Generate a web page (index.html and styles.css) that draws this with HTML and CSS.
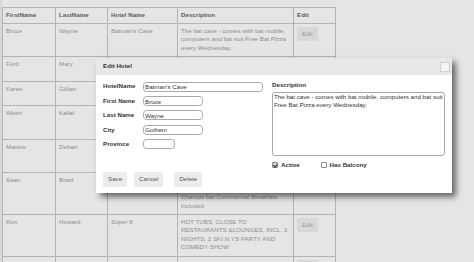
FILE: index.html
```html
<!DOCTYPE html>
<html lang="en">
<head>
    <meta charset="UTF-8">
    <meta name="viewport" content="width=device-width, initial-scale=1.0">
    <title>Hotels</title>

    <link rel="stylesheet" href="styles.css">
</head>
<body>
    <div class="page">
        <table class="hotels">
            <colgroup>
                <col class="col-first">
                <col class="col-last">
                <col class="col-hotel">
                <col class="col-desc">
                <col class="col-edit">
            </colgroup>
            <thead>
                <tr>
                    <th>FirstName</th>
                    <th>LastName</th>
                    <th>Hotel Name</th>
                    <th>Description</th>
                    <th>Edit</th>
                </tr>
            </thead>
            <tbody>
                <tr>
                    <td>Bruce</td>
                    <td>Wayne</td>
                    <td>Batman's Cave</td>
                    <td>The bat cave - comes with bat mobile, computers and bat suit Free Bat Pizza every Wednesday.</td>
                    <td><button class="edit-btn">Edit</button></td>
                </tr>
                <tr>
                    <td>Ford</td>
                    <td>Mary</td>
                    <td>Holiday Inn</td>
                    <td>Free parking and WiFi, close to the airport.</td>
                    <td><button class="edit-btn">Edit</button></td>
                </tr>
                <tr>
                    <td>Karen</td>
                    <td>Gillian</td>
                    <td>Hilton Garden</td>
                    <td>Rooftop garden, pool and spa with city views.</td>
                    <td><button class="edit-btn">Edit</button></td>
                </tr>
                <tr>
                    <td>Albert</td>
                    <td>Kallal</td>
                    <td>Best Western</td>
                    <td>Family rooms, games room for the kids, continental breakfast and late check out on Sundays.</td>
                    <td><button class="edit-btn">Edit</button></td>
                </tr>
                <tr>
                    <td>Maxine</td>
                    <td>Dehart</td>
                    <td>Comfort Suites</td>
                    <td>Ocean view suites with kitchenette, free shuttle to the beach and the shopping mall.</td>
                    <td><button class="edit-btn">Edit</button></td>
                </tr>
                <tr>
                    <td>Sean</td>
                    <td>Braid</td>
                    <td>Hampton Inn</td>
                    <td>Indoor pool and hot tub, fitness room, free parking, WiFi and movie rentals. Champs bar Commercial Breakfast included</td>
                    <td><button class="edit-btn">Edit</button></td>
                </tr>
                <tr>
                    <td>Ron</td>
                    <td>Howard</td>
                    <td>Super 8</td>
                    <td>HOT TUBS, CLOSE TO RESTAURANTS &amp;LOUNGES, INCL. 3 NIGHTS, 2 SKI.N.YS PARTY AND COMEDY SHOW</td>
                    <td><button class="edit-btn">Edit</button></td>
                </tr>
                <tr>
                    <td>Laura</td>
                    <td>Mossa</td>
                    <td>Quinta Ultima</td>
                    <td>Full use of all areas of Resort amenities</td>
                    <td><button class="edit-btn">Edit</button></td>
                </tr>
            </tbody>
        </table>
    </div>

    <!-- Edit dialog, shown over the table -->
    <div class="dialog">
        <div class="dialog-title">
            <span>Edit Hotel</span>
            <button class="dialog-close" title="Close"></button>
        </div>
        <form class="dialog-body">
            <div class="fields">
                <label class="field"><span class="field-label">HotelName</span><input class="input-wide" type="text" value="Batman's Cave"></label>
                <label class="field"><span class="field-label">First Name</span><input type="text" value="Bruce"></label>
                <label class="field"><span class="field-label">Last Name</span><input type="text" value="Wayne"></label>
                <label class="field"><span class="field-label">City</span><input type="text" value="Gothem"></label>
                <label class="field"><span class="field-label">Province</span><input class="input-short" type="text" value=""></label>
            </div>

            <div class="side">
                <span class="side-label">Description</span>
                <textarea>The bat cave - comes with bat mobile, computers and bat suit Free Bat Pizza every Wednesday.</textarea>
                <div class="checks">
                    <label><input type="checkbox" checked> Active</label>
                    <label><input type="checkbox"> Has Balcony</label>
                </div>
            </div>

            <div class="actions">
                <button type="button">Save</button>
                <button type="button">Cancel</button>
                <button type="button" class="delete-btn">Delete</button>
            </div>
        </form>
    </div>
</body>
</html>
```

FILE: styles.css
```css
/* Page behind the modal overlay */
html, body {
    overflow: hidden;
}

body {
    margin: 0;
    background-color: #e5e5e5;
    font-family: "Liberation Sans", Arial, sans-serif;
    font-size: 6.2px;
    line-height: 8.6px;
}

.page {
    padding-top: 7px;
    border-left: 2px solid #d8d8d8;
    min-height: 100vh;
}

.hotels {
    border-collapse: collapse;
    table-layout: fixed;
    width: 333px;
    color: #8e8e8e;
}

.col-first { width: 53px; }
.col-last { width: 52px; }
.col-hotel { width: 70px; }
.col-desc { width: 116px; }
.col-edit { width: 42px; }

.hotels th,
.hotels td {
    border: 1px solid #b4b4b4;
    padding: 3px 3px 3.5px;
    text-align: left;
    vertical-align: top;
}

.hotels th {
    color: #5c5c5c;
    font-weight: bold;
    padding-bottom: 3px;
}

.edit-btn {
    height: 14px;
    padding: 0 5px;
    border: none;
    background-color: #d8d8d8;
    color: #9a9a9a;
    font: inherit;
    line-height: 14px;
}

/* Dialog */
.dialog {
    position: absolute;
    left: 96px;
    top: 58px;
    width: 356px;
    background-color: #fff;
    box-shadow: 4px 4px 6px rgba(0, 0, 0, 0.55);
    color: #333;
    line-height: 8.4px;
}

.dialog-title {
    display: flex;
    justify-content: space-between;
    align-items: center;
    height: 17px;
    padding: 0 2px 0 7px;
    background-color: #e8e8e8;
    font-weight: bold;
}

.dialog-close {
    width: 10px;
    height: 10px;
    padding: 0;
    border: 1px solid #cfcfcf;
    background-color: #f4f4f4;
}

.dialog-body {
    display: grid;
    grid-template-columns: 169px 172px;
    padding: 6px 8px 6px 7px;
}

.fields {
    display: flex;
    flex-direction: column;
    gap: 4.4px;
    padding-top: 0.7px;
}

.field {
    display: flex;
    align-items: center;
    height: 10px;
}

.field-label {
    width: 40px;
    font-weight: bold;
}

.field input {
    box-sizing: border-box;
    width: 60px;
    height: 10px;
    margin: 0;
    padding: 0 1px;
    border: 1px solid #a8a8a8;
    border-radius: 3.5px;
    background-color: #fff;
    color: #333;
    font: inherit;
    outline: none;
}

.field .input-wide { width: 120px; }
.field .input-short { width: 32px; }

.side {
    display: flex;
    flex-direction: column;
}

.side-label {
    font-weight: bold;
    margin-bottom: 2.6px;
}

.side textarea {
    box-sizing: border-box;
    width: 173px;
    height: 64px;
    margin: 0;
    padding: 0 0 0 1px;
    border: 1px solid #a8a8a8;
    border-radius: 3px;
    color: #333;
    font: inherit;
    line-height: 8px;
    resize: none;
    outline: none;
}

.checks {
    display: flex;
    gap: 21px;
    margin-top: 5px;
    font-weight: bold;
}

.checks label {
    display: flex;
    align-items: center;
    gap: 3px;
}

.checks input {
    appearance: none;
    position: relative;
    width: 6px;
    height: 6px;
    margin: 0;
    border: 1px solid #8a8a8a;
    border-radius: 1px;
    background-color: #fff;
}

.checks input:checked {
    background-color: #d4d4d4;
}

.checks input:checked::after {
    content: "";
    position: absolute;
    left: 1px;
    top: -0.5px;
    width: 1.5px;
    height: 3px;
    border-right: 1px solid #333;
    border-bottom: 1px solid #333;
    transform: rotate(45deg);
}

/* Save / Cancel / Delete */
.actions {
    grid-column: 1 / -1;
    display: flex;
    gap: 7px;
    margin-top: 2.5px;
}

.actions button {
    height: 15px;
    padding: 0 5px;
    border: none;
    border-radius: 1px;
    background-color: #ececec;
    color: #555;
    font: inherit;
}

.actions .delete-btn {
    margin-left: 4px;
}
```
